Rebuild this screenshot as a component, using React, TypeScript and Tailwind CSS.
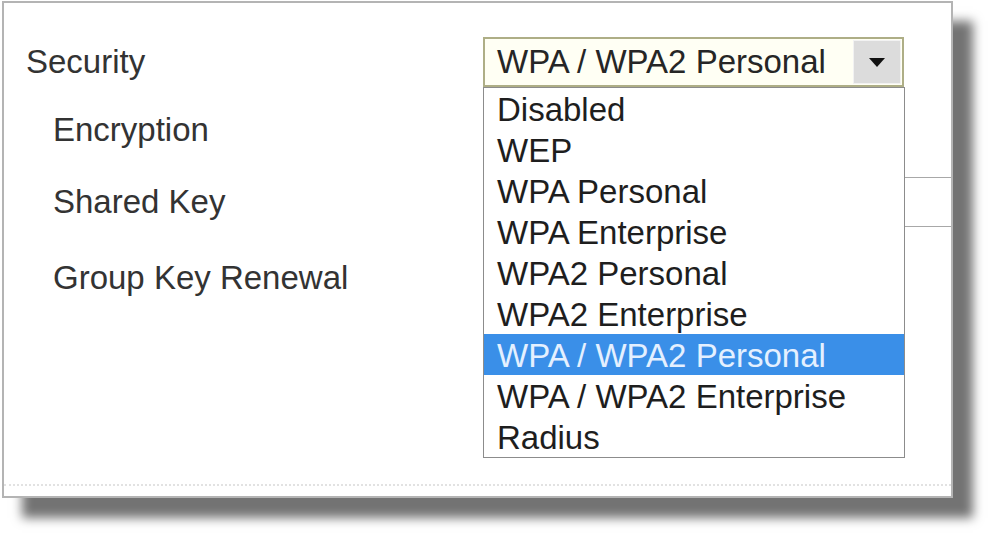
import React from 'react';

const options = [
  'Disabled',
  'WEP',
  'WPA Personal',
  'WPA Enterprise',
  'WPA2 Personal',
  'WPA2 Enterprise',
  'WPA / WPA2 Personal',
  'WPA / WPA2 Enterprise',
  'Radius',
];

const selected = 'WPA / WPA2 Personal';

const App = () => {
  return (
    <div className="w-[1000px] h-[545px] bg-white pt-[1px] pl-[2px] overflow-hidden font-['Liberation_Sans',Arial,sans-serif]">
      <div className="relative w-[951px] h-[497px] bg-white border-2 border-[#b4b4b4] shadow-[20px_20px_10px_rgba(0,0,0,0.55)]">
        <div className="flex flex-col pt-[34px] text-[33px] text-[#333]">
          {/* Security */}
          <div className="flex h-[50px] items-center">
            <div className="w-[479px] pl-[22px]">Security</div>
            <div className="relative">
              <div className="flex w-[421px] h-[50px] items-center border-2 border-[#aeae86] bg-[#fffff4]">
                <span className="flex-1 pl-[12px] text-[#262626]">{selected}</span>
                <div className="flex w-[48px] h-[44px] mr-[1px] items-center justify-center bg-[#dcdcdc] border border-[#f2f2f2]">
                  <svg width="16" height="9" viewBox="0 0 16 9">
                    <polygon points="0,0 16,0 8,9" fill="#111" />
                  </svg>
                </div>
              </div>
              <ul className="absolute left-0 top-full z-10 w-[422px] border border-[#8c8c8c] bg-white">
                {options.map((o) => (
                  <li
                    key={o}
                    className={`h-[41px] leading-[43px] pl-[13px] ${
                      o === selected ? 'bg-[#3a8fe8] text-[#e4f0ff]' : 'text-[#1e1e1e]'
                    }`}
                  >
                    {o}
                  </li>
                ))}
              </ul>
            </div>
          </div>

          {/* Encryption */}
          <div className="flex h-[50px] mt-[18px] items-center">
            <div className="w-[479px] pl-[49px]">Encryption</div>
          </div>

          {/* Shared Key */}
          <div className="flex h-[50px] mt-[22px] items-center">
            <div className="w-[479px] pl-[49px]">Shared Key</div>
            <div className="flex-1 h-[50px] border-y border-l border-[#a8a8a8] bg-white" />
          </div>

          {/* Group Key Renewal */}
          <div className="flex h-[50px] mt-[26px] items-center">
            <div className="w-[479px] pl-[49px]">Group Key Renewal</div>
          </div>
        </div>

        <div className="absolute left-0 right-0 bottom-[10px] border-b-2 border-dotted border-[#e2e2e2]" />
      </div>
    </div>
  );
};

export default App;
